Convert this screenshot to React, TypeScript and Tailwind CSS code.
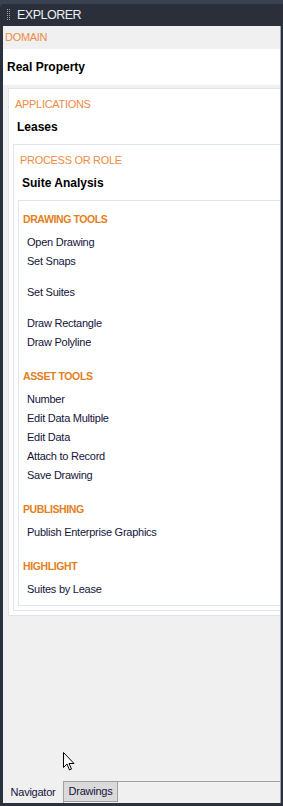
import React from "react";

type Section = { title: string; groups: string[][] };

const sections: Section[] = [
  {
    title: "DRAWING TOOLS",
    groups: [["Open Drawing", "Set Snaps"], ["Set Suites"], ["Draw Rectangle", "Draw Polyline"]],
  },
  {
    title: "ASSET TOOLS",
    groups: [["Number", "Edit Data Multiple", "Edit Data", "Attach to Record", "Save Drawing"]],
  },
  { title: "PUBLISHING", groups: [["Publish Enterprise Graphics"]] },
  { title: "HIGHLIGHT", groups: [["Suites by Lease"]] },
];

const font = { fontFamily: '"Liberation Sans", Arial, sans-serif' };

const Label = ({ children, pl }: { children: React.ReactNode; pl: string }) => (
  <div className={`flex h-[20px] items-center text-[11px] tracking-[-0.3px] text-[#ef8b45] ${pl}`}>{children}</div>
);

const Title = ({ children, pl }: { children: React.ReactNode; pl: string }) => (
  <div className={`flex h-[20px] items-center text-[12px] font-bold text-black ${pl}`}>{children}</div>
);

const GripDots = () => (
  <svg width="4" height="12" viewBox="0 0 4 12" className="mr-[6px]">
    {[0, 2, 4, 6, 8, 10].map((y) => (
      <g key={y} fill="#9aa1ad">
        <rect x="0" y={y} width="1" height="1" />
        <rect x="2" y={y} width="1" height="1" />
      </g>
    ))}
  </svg>
);

const Cursor = () => (
  <svg width="12" height="19" viewBox="0 0 12 19" className="absolute left-[63px] top-[752px]">
    <path d="M0.5 0.5 L0.5 15.5 L4 12 L6.5 18 L8.5 17 L6 11.5 L11 11.5 Z" fill="#fff" stroke="#000" strokeWidth="1" />
  </svg>
);

export default function App() {
  return (
    <div className="relative flex h-[806px] w-[283px] flex-col overflow-hidden bg-[#2c323d]" style={font}>
      <div className="bg-[#3a4150] pt-[4px]">
        <div className="flex h-[22px] items-center rounded-tl-[4px] bg-[#2a2f3a] pl-[7px] text-[12.5px] tracking-[-0.5px] text-[#eef0f5]">
          <GripDots />
          EXPLORER
        </div>
      </div>

      <div className="mb-[3px] ml-[3px] mr-[2px] flex flex-1 flex-col border-r border-[#9ea3ab] bg-[#f0f0f0]">
        <div className="flex h-[23px] items-center pl-[2px] text-[11px] tracking-[-0.3px] text-[#ef8b45]">DOMAIN</div>
        <div className="flex h-[36px] items-center bg-white pl-[4px] text-[12px] font-bold text-black">Real Property</div>

        <div className="ml-[5px] mt-[3px] border-y border-l border-[#dfe5f0] bg-white pb-[4px] pt-[5px]">
          <Label pl="pl-[6px]">APPLICATIONS</Label>
          <div className="mt-[3px]">
            <Title pl="pl-[8px]">Leases</Title>
          </div>

          <div className="ml-[4px] mt-[7px] border-y border-l border-[#dfe5f0] pb-[4px] pt-[5px]">
            <Label pl="pl-[6px]">PROCESS OR ROLE</Label>
            <div className="mt-[3px]">
              <Title pl="pl-[8px]">Suite Analysis</Title>
            </div>

            <div className="ml-[4px] mt-[7px] border-y border-l border-[#dfe5f0] pb-[6px] pt-[9px]">
              {sections.map((s, i) => (
                <div key={s.title} className={i === 0 ? "" : "mt-[15px]"}>
                  <div className="flex h-[20px] items-center pl-[4px] text-[10.5px] font-bold tracking-[-0.4px] text-[#e27f22]">
                    {s.title}
                  </div>
                  <div className="mt-[3px] flex flex-col gap-[12px]">
                    {s.groups.map((g, j) => (
                      <div key={j}>
                        {g.map((item) => (
                          <div
                            key={item}
                            className="flex h-[19px] items-center pl-[8px] text-[11px] tracking-[-0.25px] text-[#14143a]"
                          >
                            {item}
                          </div>
                        ))}
                      </div>
                    ))}
                  </div>
                </div>
              ))}
            </div>
          </div>
        </div>

        <div className="flex-1" />

        <div className="flex h-[22px] items-start">
          <div className="flex h-[22px] w-[61px] items-center justify-center border-r border-[#a0a0a0] text-[11px] tracking-[-0.25px] text-[#14143a]">
            Navigator
          </div>
          <div className="flex h-full flex-1 items-start border-t border-[#a0a0a0]">
            <div className="flex h-[20px] w-[54px] items-center justify-center border-b border-r border-[#a0a0a0] bg-[#dadada] text-[11px] tracking-[-0.25px] text-[#14143a]">
              Drawings
            </div>
          </div>
        </div>
      </div>

      <Cursor />
    </div>
  );
}
